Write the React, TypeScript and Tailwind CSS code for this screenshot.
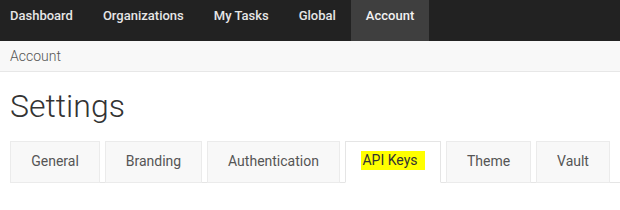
import React from "react";

const navItems = ["Dashboard", "Organizations", "My Tasks", "Global", "Account"];
const tabs: { label: string; w: string; active?: boolean }[] = [
  { label: "General", w: "w-[90px]" },
  { label: "Branding", w: "w-[97px]" },
  { label: "Authentication", w: "w-[133px]" },
  { label: "API Keys", w: "w-[96px]", active: true },
  { label: "Theme", w: "w-[85px]" },
  { label: "Vault", w: "w-[74px]" },
];

export default function App() {
  return (
    <div className="w-[620px] h-[210px] bg-white overflow-hidden" style={{ fontFamily: "Roboto, 'Liberation Sans', sans-serif" }}>
      <nav className="flex h-[41px] bg-[#222222]">
        {navItems.map((item, i) => (
          <div
            key={item}
            className={`${i === 0 ? "pl-[10px]" : "pl-[15px]"} pr-[15px] pt-[6px] h-full text-[13px] leading-[20px] font-medium ${
              item === "Account" ? "bg-[#3f3f3f] text-[#f2f2f2]" : "text-[#e6e6e6]"
            }`}
          >
            {item}
          </div>
        ))}
      </nav>
      <div className="h-[31px] bg-[#f8f8f8] border-b border-[#e7e7e7] pl-[10px] pt-[5px] text-[14px] leading-[20px] font-light text-[#555555]">
        Account
      </div>
      <h1 className="ml-[10px] mt-[15px] text-[32px] leading-[38px] font-light text-[#333333]">Settings</h1>
      <div className="ml-[10px] mt-[16px] flex gap-[5px] border-b border-[#e5e5e5]">
        {tabs.map((t) => (
          <div
            key={t.label}
            className={`${t.w} h-[42px] -mb-px flex justify-center pt-[9px] border text-[14px] leading-[20px] ${
              t.active ? "bg-white border-[#e5e5e5] border-b-white text-[#333333]" : "bg-[#f8f8f8] border-[#ebebeb] text-[#555555]"
            }`}
          >
            {t.active ? (
              <span className="bg-[#ffff00] pl-[1px] pr-[7px] h-[19px] leading-[19px]">{t.label}</span>
            ) : (
              t.label
            )}
          </div>
        ))}
      </div>
    </div>
  );
}
